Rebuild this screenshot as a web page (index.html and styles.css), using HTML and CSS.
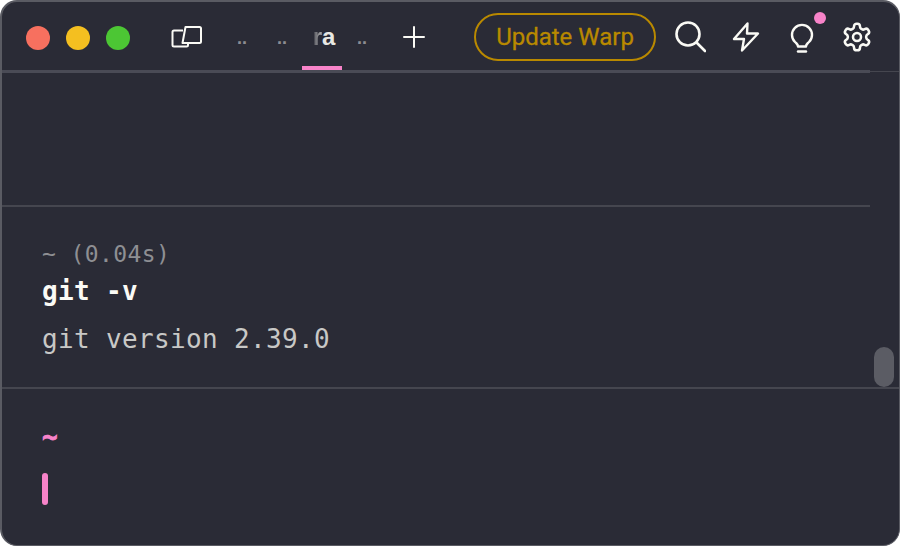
FILE: index.html
```html
<!DOCTYPE html>
<html lang="en">
<head>
<meta charset="utf-8">
<title>Warp</title>
<link rel="stylesheet" href="styles.css">
</head>
<body>
<div class="window">
  <header class="titlebar">
    <div class="lights">
      <span class="light red"></span>
      <span class="light yellow"></span>
      <span class="light green"></span>
    </div>
    <svg class="tabs-icon" width="32" height="24" viewBox="0 0 32 24" fill="none" stroke="#fafaf5" stroke-width="2" stroke-linejoin="round">
      <path d="M12 5.500H3a1.500 1.500 0 0 0-1.500 1.500v13a1.500 1.500 0 0 0 1.500 1.500h12.500a1.500 1.500 0 0 0 1.500-1.500v-1.500"/>
      <path d="M14.500 2h14a1.500 1.500 0 0 1 1.500 1.500v13a1.500 1.500 0 0 1-1.500 1.500H11.500z"/>
    </svg>
    <nav class="tabs">
      <span class="tab">..</span>
      <span class="tab">..</span>
      <span class="tab active"><span class="fade">r</span>a</span>
      <span class="tab">..</span>
    </nav>
    <svg class="plus" width="24" height="24" viewBox="0 0 24 24" stroke="#fafaf5" stroke-width="2" stroke-linecap="round"><path d="M12 2v20M2 12h20"/></svg>
    <button class="update">Update Warp</button>
    <div class="actions">
      <svg width="32" height="32" viewBox="0 0 32 32" fill="none" stroke="#fafaf5" stroke-width="2.600" stroke-linecap="round"><circle cx="14" cy="13" r="11.500"/><path d="M23 22l8 8"/></svg>
      <svg class="bolt" width="28" height="30" viewBox="0 0 28 30" fill="none" stroke="#fafaf5" stroke-width="2.400" stroke-linejoin="round"><path d="M15.500 1.500 2 17h10l-2 11.500L26 11.500H15z"/></svg>
      <span class="bulb">
        <svg width="24" height="30" viewBox="0 0 24 30" fill="none" stroke="#fafaf5" stroke-width="2.400" stroke-linecap="round" stroke-linejoin="round"><path d="M8 23.500c0-2.500-1-2.500-3-4.500a10 10 0 1 1 14 0c-2 2-3 2-3 4.500z"/><path d="M8 28.500h8"/></svg>
        <span class="dot"></span>
      </span>
      <svg class="gear" width="32" height="32" viewBox="0 0 24 24" fill="none" stroke="#fafaf5" stroke-width="1.900" stroke-linejoin="round"><circle cx="12" cy="12" r="3"/><path d="M12.220 2h-.44a2 2 0 0 0-2 2v.18a2 2 0 0 1-1 1.730l-.43.25a2 2 0 0 1-2 0l-.15-.08a2 2 0 0 0-2.730.73l-.22.38a2 2 0 0 0 .73 2.730l.15.1a2 2 0 0 1 1 1.720v.51a2 2 0 0 1-1 1.740l-.15.09a2 2 0 0 0-.73 2.730l.22.38a2 2 0 0 0 2.730.73l.15-.08a2 2 0 0 1 2 0l.43.25a2 2 0 0 1 1 1.730V20a2 2 0 0 0 2 2h.44a2 2 0 0 0 2-2v-.18a2 2 0 0 1 1-1.730l.43-.25a2 2 0 0 1 2 0l.15.08a2 2 0 0 0 2.730-.73l.22-.39a2 2 0 0 0-.73-2.730l-.15-.08a2 2 0 0 1-1-1.740v-.5a2 2 0 0 1 1-1.740l.15-.09a2 2 0 0 0 .73-2.730l-.22-.38a2 2 0 0 0-2.730-.73l-.15.08a2 2 0 0 1-2 0l-.43-.25a2 2 0 0 1-1-1.730V4a2 2 0 0 0-2-2z"/></svg>
    </div>
  </header>
  <div class="rule-top"></div>
  <main class="blocks">
    <section class="block spacer"></section>
    <section class="block output">
      <div class="meta">~ (0.04s)</div>
      <div class="cmd">git -v</div>
      <div class="out">git version 2.39.0</div>
    </section>
    <section class="block prompt">
      <div class="tilde">~</div>
      <div class="cursor"></div>
    </section>
  </main>
  <div class="scrollbar"></div>
</div>
</body>
</html>
```
FILE: styles.css
```css
* { box-sizing: border-box; }
html, body { margin: 0; height: 100%; background: #fff; overflow: hidden; }
.window {
  position: relative;
  width: 900px;
  height: 546px;
  display: flex;
  flex-direction: column;
  background: #2a2b36;
  border: 2px solid #5a5b63;
  border-width: 2px 1px 1px 2px;
  border-radius: 17px;
  overflow: hidden;
}
.titlebar {
  height: 68px;
  display: flex;
  align-items: center;
  flex: none;
  font-family: Roboto, sans-serif;
}
.lights { display: flex; gap: 16px; margin-left: 24px; margin-top: 3px; }
.light { width: 24px; height: 24px; border-radius: 50%; }
.red { background: #f7705f; }
.yellow { background: #f4bf20; }
.green { background: #4cc634; }
.tabs-icon { margin-left: 41px; margin-top: 1px; }
.tabs { display: flex; height: 68px; margin-left: 19px; }
.tab {
  width: 40px;
  display: flex;
  align-items: center;
  justify-content: center;
  color: #8c8d93;
  font: 700 18px "Liberation Sans", sans-serif;
  padding-top: 4px;
}
.active {
  color: #e8e8e4;
  font-size: 24px;
  padding-top: 6px;
  padding-left: 4px;
  border-bottom: 4px solid #f783c9;
}
.fade {
  background: linear-gradient(90deg, #55565e, #b0b0b0);
  -webkit-background-clip: text;
  background-clip: text;
  color: transparent;
}
.plus { margin-left: 20px; margin-top: 2px; }
.update {
  margin-left: 48px;
  margin-top: 2px;
  width: 182px;
  height: 48px;
  border: 2px solid #b98900;
  border-radius: 24px;
  background: none;
  color: #b98900;
  font: 400 24px Roboto, sans-serif;
  -webkit-text-stroke: 0.3px #b98900;
  padding: 0;
}
.actions { display: flex; align-items: center; gap: 26px; margin-left: 18px; margin-top: 2px; }
.bulb { position: relative; display: block; height: 30px; margin-left: 4px; margin-top: 1px; }
.gear { margin-left: 1px; }
.dot {
  position: absolute;
  top: -11px;
  right: -12px;
  width: 12px;
  height: 12px;
  border-radius: 50%;
  background: #f783c9;
}
.rule-top { position: relative; flex: none; height: 3px; background: #4a4b56; margin-right: 29px; }
.rule-top::after {
  content: "";
  position: absolute;
  top: 1px;
  right: -29px;
  width: 29px;
  height: 1px;
  background: #45464f;
}
.blocks {
  flex: 1;
  font-family: "DejaVu Sans Mono", monospace;
  font-size: 26px;
  letter-spacing: 0.350px;
}
.block { padding-left: 40px; }
.spacer { height: 134px; border-bottom: 2px solid #45464f; margin-right: 29px; }
.output { height: 182px; border-bottom: 2px solid #45464f; padding-top: 29px; }
.meta { color: #8e8f93; font-size: 23px; letter-spacing: 0.400px; line-height: 36px; }
.cmd { color: #fafaf5; font-weight: 700; line-height: 38px; }
.out { color: #c8c8c6; line-height: 58px; }
.prompt { padding-top: 30px; }
.tilde { color: #f783c9; font-weight: 700; line-height: 36px; -webkit-text-stroke: 0.8px #f783c9; }
.cursor { width: 6px; height: 32px; margin-top: 18px; border-radius: 3px; background: #f783c9; }
.scrollbar {
  position: absolute;
  right: 5px;
  top: 345px;
  width: 20px;
  height: 40px;
  border-radius: 10px;
  background: #5b5c64;
}
```
